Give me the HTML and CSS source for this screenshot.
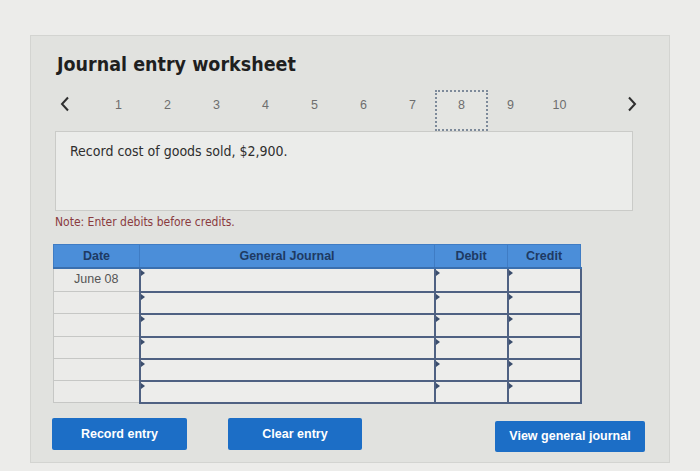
FILE: index.html
```html
<!DOCTYPE html>
<html>
<head>
<meta charset="utf-8">
<link rel="stylesheet" href="styles.css">
</head>
<body>
<div class="panel">
  <h1 class="title">Journal entry worksheet</h1>
  <div class="pager">
    <span class="arrow prev"><svg width="10" height="16" viewBox="0 0 10 16"><polyline points="8,1.5 2,8 8,14.5" fill="none" stroke="#2f2f2f" stroke-width="2"/></svg></span>
    <span class="page">1</span>
    <span class="page">2</span>
    <span class="page">3</span>
    <span class="page">4</span>
    <span class="page">5</span>
    <span class="page">6</span>
    <span class="page">7</span>
    <span class="page active">8</span>
    <span class="page">9</span>
    <span class="page">10</span>
    <span class="arrow next"><svg width="10" height="16" viewBox="0 0 10 16"><polyline points="2,1.5 8,8 2,14.5" fill="none" stroke="#2f2f2f" stroke-width="2"/></svg></span>
  </div>
  <div class="task">Record cost of goods sold, $2,900.</div>
  <p class="note">Note: Enter debits before credits.</p>
  <table class="journal">
    <thead>
      <tr>
        <th class="c-date">Date</th>
        <th class="c-acct">General Journal</th>
        <th class="c-num">Debit</th>
        <th class="c-num">Credit</th>
      </tr>
    </thead>
    <tbody>
      <tr class="r1"><td class="date">June 08</td><td class="in"></td><td class="in"></td><td class="in"></td></tr>
      <tr class="r2"><td class="date"></td><td class="in"></td><td class="in"></td><td class="in"></td></tr>
      <tr class="r1"><td class="date"></td><td class="in"></td><td class="in"></td><td class="in"></td></tr>
      <tr class="r2"><td class="date"></td><td class="in"></td><td class="in"></td><td class="in"></td></tr>
      <tr class="r2"><td class="date"></td><td class="in"></td><td class="in"></td><td class="in"></td></tr>
      <tr class="r2"><td class="date"></td><td class="in"></td><td class="in"></td><td class="in"></td></tr>
    </tbody>
  </table>
  <div class="actions">
    <button class="btn btn-record">Record entry</button>
    <button class="btn btn-clear">Clear entry</button>
    <button class="btn btn-view">View general journal</button>
  </div>
</div>
</body>
</html>
```
FILE: styles.css
```css
html, body {
  margin: 0;
  padding: 0;
}
body {
  background: #ececea;
  width: 700px;
  height: 471px;
  overflow: hidden;
  padding-top: 35px;
  box-sizing: border-box;
}
.panel {
  margin-left: 30px;
  width: 640px;
  height: 428px;
  box-sizing: border-box;
  background: #e1e2df;
  border: 1px solid #d3d4d1;
  padding: 18px 0 0 24px;
}
.title {
  margin: 0 0 0 2px;
  font-family: "DejaVu Sans Condensed", "DejaVu Sans", sans-serif;
  font-weight: bold;
  font-size: 19.5px;
  line-height: 22px;
  color: #1f1f1f;
}
.pager {
  display: flex;
  align-items: flex-start;
  margin-top: 14px;
  height: 41px;
  width: 582px;
  font-family: "Liberation Sans", Arial, sans-serif;
  font-size: 12.5px;
  color: #6e6e6e;
}
.arrow {
  display: flex;
  padding-top: 6px;
}
.prev {
  width: 34px;
  margin-left: 5px;
}
.next {
  margin-left: auto;
}
.page {
  width: 49px;
  height: 41px;
  box-sizing: border-box;
  text-align: center;
  line-height: 14px;
  padding-top: 8px;
}
.page.active {
  width: 53px;
  margin: 0 -2px;
  border: 2px dotted #7d8a9a;
  padding-top: 6px;
  background: #e4e5e2;
}
.task {
  width: 578px;
  height: 80px;
  box-sizing: border-box;
  background: #ebecea;
  border: 1px solid #cacbc8;
  padding: 10px 14px;
  font-family: "DejaVu Sans Condensed", "DejaVu Sans", sans-serif;
  font-size: 14px;
  line-height: 18px;
  color: #2e2e2e;
}
.note {
  margin: 4px 0 0 0;
  font-family: "DejaVu Sans Condensed", "DejaVu Sans", sans-serif;
  font-size: 12px;
  line-height: 15px;
  color: #8a3b3e;
}
.journal {
  margin: 14px 0 0 -2px;
  width: 524px;
  border-collapse: collapse;
  table-layout: fixed;
  font-family: "Liberation Sans", Arial, sans-serif;
  font-size: 12.5px;
}
.journal th {
  height: 22px;
  padding: 0;
  background: #4b8ed9;
  color: #1e3a63;
  font-weight: bold;
  border: 1px solid #3f7cc4;
  border-bottom: 2px solid #3a6fae;
}
.c-date { width: 85px; }
.c-acct { width: 294px; }
.c-num { width: 72px; }
.journal td {
  padding: 0;
}
.r1 td { height: 19px; }
.r2 td { height: 18px; }
.journal td.date {
  background: #ebebe9;
  border: 1px solid #c6c7c5;
  text-align: center;
  color: #555;
  vertical-align: top;
  padding-top: 3px;
}
.journal td.in {
  position: relative;
  background: #ededeb;
  border: 2px solid #4f6182;
}
.journal td.in::before {
  content: "";
  position: absolute;
  left: 0;
  top: 1px;
  border-left: 4px solid #3b4d6c;
  border-top: 3px solid transparent;
  border-bottom: 3px solid transparent;
}
.actions {
  display: flex;
  align-items: flex-start;
  margin: 14px 0 0 -3px;
  width: 593px;
}
.btn {
  height: 32px;
  border: none;
  border-radius: 2px;
  background: #1c6ec6;
  color: #fff;
  font-family: "Liberation Sans", Arial, sans-serif;
  font-weight: bold;
  font-size: 12.5px;
  padding: 0;
}
.btn-record { width: 135px; }
.btn-clear { width: 134px; margin-left: 41px; }
.btn-view { width: 150px; margin-left: auto; margin-top: 3px; height: 31px; }
```
